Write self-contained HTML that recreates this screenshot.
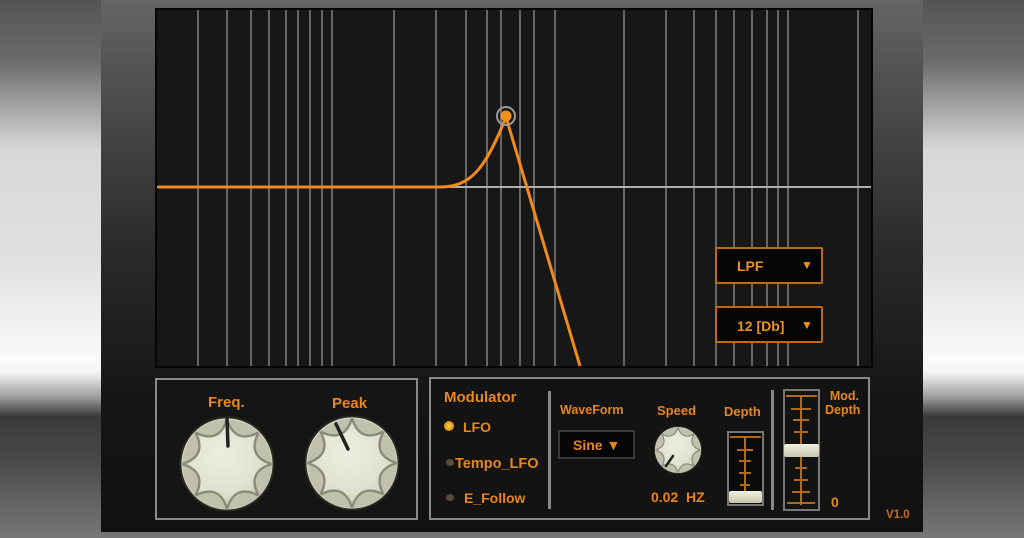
<!DOCTYPE html>
<html><head><meta charset="utf-8"><style>
*{margin:0;padding:0;box-sizing:border-box}
body{width:1024px;height:538px;overflow:hidden;position:relative;font-family:"Liberation Sans",sans-serif;font-weight:bold;
background:linear-gradient(180deg,#555 0px,#6a6a6a 60px,#a8a8a8 110px,#d8d8d8 150px,#e0e0e0 260px,#fafafa 360px,#f6f6f6 372px,#999 398px,#3a3a3a 416px,#4a4a4a 460px,#777 538px);}
.panel{position:absolute;left:101px;top:0;width:822px;height:532px;background:linear-gradient(180deg,#666 0px,#555 60px,#2a2a2a 250px,#151515 400px,#111 532px);}
.t{position:absolute;color:#e8861c;font-size:14px;white-space:nowrap}
.box{position:absolute;border:2px solid #8a8a8a;background:#141414}
.dd{position:absolute;border:2px solid #c06a10;background:#050505;border-radius:2px;color:#f09020;font-size:14px}
</style></head><body>
<div class="panel"></div>
<svg width="1024" height="538" style="position:absolute;left:0;top:0">
<rect x="155" y="8" width="718" height="360" fill="#050505"/>
<rect x="157" y="10" width="714" height="356" fill="#171717"/>
<g stroke="#666" stroke-width="2">
<line x1="198" y1="10" x2="198" y2="366"/><line x1="227" y1="10" x2="227" y2="366"/><line x1="251" y1="10" x2="251" y2="366"/><line x1="269" y1="10" x2="269" y2="366"/><line x1="286" y1="10" x2="286" y2="366"/><line x1="298" y1="10" x2="298" y2="366"/><line x1="310" y1="10" x2="310" y2="366"/><line x1="322" y1="10" x2="322" y2="366"/><line x1="332" y1="10" x2="332" y2="366"/>
<line x1="394" y1="10" x2="394" y2="366"/><line x1="436" y1="10" x2="436" y2="366"/><line x1="466" y1="10" x2="466" y2="366"/><line x1="487" y1="10" x2="487" y2="366"/><line x1="501" y1="10" x2="501" y2="366"/><line x1="520" y1="10" x2="520" y2="366"/><line x1="534" y1="10" x2="534" y2="366"/><line x1="555" y1="10" x2="555" y2="366"/>
<line x1="624" y1="10" x2="624" y2="366"/><line x1="666" y1="10" x2="666" y2="366"/><line x1="694" y1="10" x2="694" y2="366"/><line x1="716" y1="10" x2="716" y2="366"/><line x1="734" y1="10" x2="734" y2="366"/><line x1="752" y1="10" x2="752" y2="366"/><line x1="767" y1="10" x2="767" y2="366"/><line x1="778" y1="10" x2="778" y2="366"/><line x1="788" y1="10" x2="788" y2="366"/><line x1="858" y1="10" x2="858" y2="366"/>
</g>
<line x1="157" y1="187" x2="871" y2="187" stroke="#b0b0b0" stroke-width="2"/>
<path d="M158,187 L440,187 C470,187 485,170 506,117 L580,366" fill="none" stroke="#f08a1c" stroke-width="3"/>
<circle cx="506" cy="116" r="9" fill="none" stroke="#999" stroke-width="2"/>
<circle cx="506" cy="116" r="5.5" fill="#f39018"/>
</svg>
<div class="dd" style="left:715px;top:247px;width:108px;height:37px;"><span style="position:absolute;left:20px;top:9px">LPF</span><span style="position:absolute;left:84px;top:9px;font-size:12px">▼</span></div>
<div class="dd" style="left:715px;top:306px;width:108px;height:37px;"><span style="position:absolute;left:20px;top:10px">12 [Db]</span><span style="position:absolute;left:84px;top:10px;font-size:12px">▼</span></div>
<div class="box" style="left:155px;top:378px;width:263px;height:142px;background:#151515"></div>
<div class="box" style="left:429px;top:377px;width:441px;height:143px;background:#131313"></div>
<svg width="1024" height="538" style="position:absolute;left:0;top:0">
<defs>
<radialGradient id="kg" cx="0.45" cy="0.4" r="0.6"><stop offset="0" stop-color="#eceedf"/><stop offset="0.7" stop-color="#dfe1d0"/><stop offset="1" stop-color="#c8cab6"/></radialGradient>
<g id="seg"><path d="M0,-47 Q8.4,-20.3 33.2,-33.2 A47 47 0 0 0 0,-47 Z" fill="#bfc1ab"/><path d="M0,-47 Q8.4,-20.3 33.2,-33.2" fill="none" stroke="#8a8a7a" stroke-width="2.5"/></g>
<g id="knob"><circle r="50" fill="#2a2a22"/><circle r="48" fill="url(#kg)"/>
<use href="#seg"/><use href="#seg" transform="rotate(45)"/><use href="#seg" transform="rotate(90)"/><use href="#seg" transform="rotate(135)"/><use href="#seg" transform="rotate(180)"/><use href="#seg" transform="rotate(225)"/><use href="#seg" transform="rotate(270)"/><use href="#seg" transform="rotate(315)"/></g>
</defs>
<use href="#knob" transform="translate(227,464) scale(0.95)"/>
<line x1="227" y1="419" x2="228" y2="446" stroke="#222" stroke-width="3.5" stroke-linecap="round"/>
<use href="#knob" transform="translate(352,463) scale(0.95)"/>
<line x1="336" y1="424" x2="348" y2="449" stroke="#222" stroke-width="3.5" stroke-linecap="round"/>
<use href="#knob" transform="translate(678,450) scale(0.48)"/>
<line x1="673" y1="456" x2="666" y2="466" stroke="#222" stroke-width="2.5" stroke-linecap="round"/>
</svg>
<div class="t" style="left:208px;top:394px;font-size:15px">Freq.</div>
<div class="t" style="left:332px;top:395px;font-size:15px">Peak</div>
<div class="t" style="left:444px;top:389px;font-size:15px">Modulator</div>
<div style="position:absolute;left:444px;top:421px;width:10px;height:10px;border-radius:50%;background:radial-gradient(#ffd040,#c07a10)"></div>
<div class="t" style="left:463px;top:419px">LFO</div>
<div style="position:absolute;left:446px;top:459px;width:8px;height:7px;border-radius:50%;background:#5a4a3a"></div>
<div class="t" style="left:455px;top:456px;font-size:14.5px">Tempo_LFO</div>
<div style="position:absolute;left:446px;top:494px;width:8px;height:7px;border-radius:50%;background:#5a4a3a"></div>
<div class="t" style="left:464px;top:490px">E_Follow</div>
<div style="position:absolute;left:548px;top:391px;width:3px;height:118px;background:#888"></div>
<div class="t" style="left:560px;top:403px;font-size:12.5px">WaveForm</div>
<div style="position:absolute;left:558px;top:430px;width:77px;height:29px;border:2px solid #3a3a3a;background:#050505"></div>
<div class="t" style="left:573px;top:437px">Sine ▼</div>
<div class="t" style="left:657px;top:403px;font-size:13px">Speed</div>
<div class="t" style="left:651px;top:489px">0.02 &nbsp;HZ</div>
<div class="t" style="left:724px;top:404px;font-size:13px">Depth</div>
<div style="position:absolute;left:727px;top:431px;width:37px;height:75px;border:2px solid #777;background:#0a0a0a"></div>
<svg width="1024" height="538" style="position:absolute;left:0;top:0">
<g stroke="#b06a20" stroke-width="2">
<line x1="745" y1="437" x2="745" y2="492"/><line x1="730" y1="437" x2="761" y2="437"/><line x1="737" y1="450" x2="753" y2="450"/><line x1="739" y1="461" x2="751" y2="461"/><line x1="739" y1="473" x2="751" y2="473"/><line x1="740" y1="485" x2="750" y2="485"/>
<line x1="801" y1="396" x2="801" y2="505"/><line x1="786" y1="396" x2="817" y2="396"/><line x1="791" y1="409" x2="811" y2="409"/><line x1="793" y1="420" x2="809" y2="420"/><line x1="794" y1="432" x2="808" y2="432"/><line x1="795" y1="468" x2="807" y2="468"/><line x1="794" y1="480" x2="808" y2="480"/><line x1="792" y1="492" x2="810" y2="492"/><line x1="787" y1="503" x2="815" y2="503"/>
</g></svg>
<div style="position:absolute;left:729px;top:491px;width:33px;height:12px;background:linear-gradient(#f0f0e0,#c8c8b0);border-radius:2px"></div>
<div style="position:absolute;left:771px;top:390px;width:3px;height:120px;background:#888"></div>
<div style="position:absolute;left:783px;top:389px;width:37px;height:122px;border:2px solid #777"></div>
<div style="position:absolute;left:784px;top:444px;width:35px;height:13px;background:linear-gradient(#f0f0e0,#c8c8b0);border-radius:2px"></div>
<div class="t" style="left:825px;top:389px;font-size:12.5px;text-align:center;line-height:14px">&nbsp;Mod.<br>Depth</div>
<div class="t" style="left:831px;top:494px">0</div>
<div class="t" style="left:886px;top:509px;font-size:11.5px;color:#c07020">V1.0</div>
</body></html>
